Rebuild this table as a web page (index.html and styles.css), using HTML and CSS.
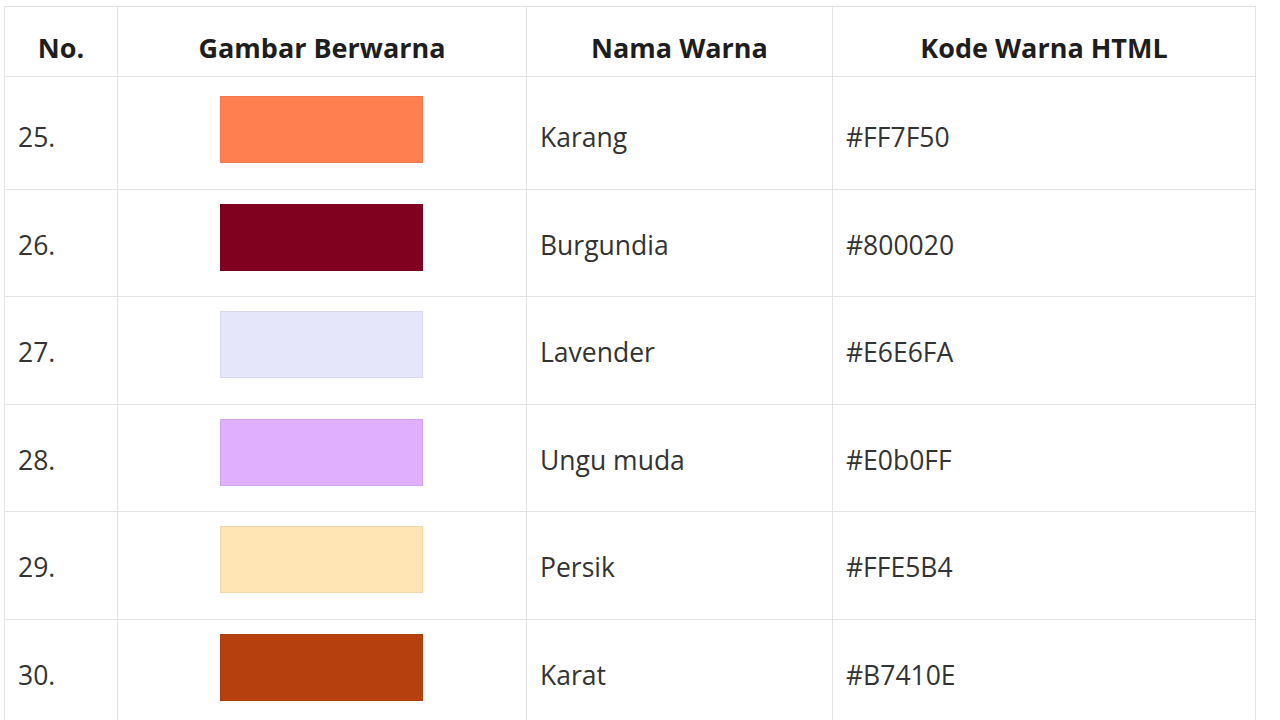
FILE: index.html
```html
<!DOCTYPE html>
<html lang="id">
<head>
<meta charset="utf-8">
<title>Kode Warna HTML</title>
<link rel="stylesheet" href="styles.css">
</head>
<body>
<table class="colors">
  <colgroup>
    <col class="c-no">
    <col class="c-img">
    <col class="c-name">
    <col class="c-code">
  </colgroup>
  <thead>
    <tr class="head">
      <th>No.</th>
      <th>Gambar Berwarna</th>
      <th>Nama Warna</th>
      <th>Kode Warna HTML</th>
    </tr>
  </thead>
  <tbody>
    <tr class="row first">
      <td>25.</td>
      <td class="img"><div class="swatch" style="background:#FF7F50"></div></td>
      <td>Karang</td>
      <td>#FF7F50</td>
    </tr>
    <tr class="row h107">
      <td>26.</td>
      <td class="img"><div class="swatch" style="background:#800020"></div></td>
      <td>Burgundia</td>
      <td>#800020</td>
    </tr>
    <tr class="row">
      <td>27.</td>
      <td class="img"><div class="swatch" style="background:#E6E6FA"></div></td>
      <td>Lavender</td>
      <td>#E6E6FA</td>
    </tr>
    <tr class="row h107">
      <td>28.</td>
      <td class="img"><div class="swatch" style="background:#E0B0FF"></div></td>
      <td>Ungu muda</td>
      <td>#E0b0FF</td>
    </tr>
    <tr class="row">
      <td>29.</td>
      <td class="img"><div class="swatch" style="background:#FFE5B4"></div></td>
      <td>Persik</td>
      <td>#FFE5B4</td>
    </tr>
    <tr class="row">
      <td>30.</td>
      <td class="img"><div class="swatch" style="background:#B7410E"></div></td>
      <td>Karat</td>
      <td>#B7410E</td>
    </tr>
  </tbody>
</table>
</body>
</html>
```
FILE: styles.css
```css
html, body {
  margin: 0;
  padding: 0;
  background: #ffffff;
}

body {
  font-family: "Open Sans", "Noto Sans", "Liberation Sans", sans-serif;
  color: #333333;
  overflow: hidden;
}

.colors {
  margin: 6px 0 0 4px;
  border-collapse: collapse;
  table-layout: fixed;
  width: 1251px;
}

.c-no { width: 113px; }
.c-img { width: 409px; }
.c-name { width: 306px; }
.c-code { width: 423px; }

.colors th,
.colors td {
  border: 1px solid #e3e3e3;
  vertical-align: top;
  box-sizing: border-box;
}

.head th {
  height: 70px;
  padding: 23px 0 0 0;
  font-size: 27px;
  font-weight: 700;
  color: #1e1e1e;
  text-align: center;
  line-height: 1.36;
}

.row td {
  height: 108px;
  padding: 37px 0 0 13px;
  font-size: 26.5px;
  line-height: 1.36;
  text-align: left;
}

.row.h107 td {
  height: 107px;
}

.row.first td {
  height: 113px;
  padding-top: 42px;
}

.row td.img {
  padding: 14px 2px 0 0;
}

.row.first td.img {
  padding-top: 19px;
}

.swatch {
  width: 203px;
  height: 67px;
  margin: 0 auto;
  box-sizing: border-box;
  box-shadow: inset 0 0 0 1px rgba(0, 0, 0, 0.06);
}
```
